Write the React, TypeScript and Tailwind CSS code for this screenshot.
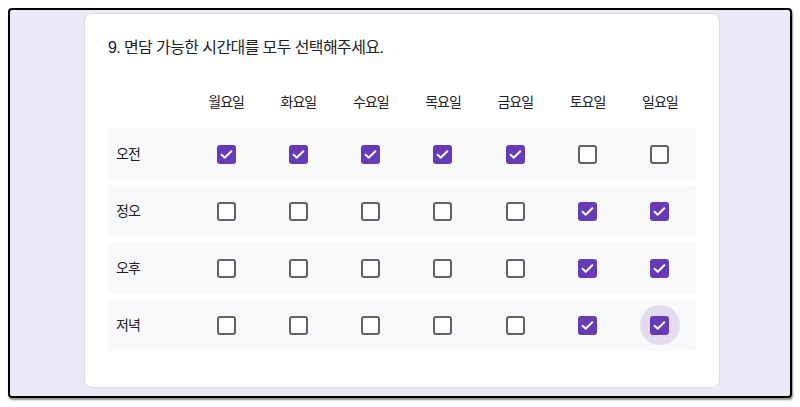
import React from "react";

const days = ["월요일", "화요일", "수요일", "목요일", "금요일", "토요일", "일요일"];
const rows: { label: string; checks: boolean[] }[] = [
  { label: "오전", checks: [true, true, true, true, true, false, false] },
  { label: "정오", checks: [false, false, false, false, false, true, true] },
  { label: "오후", checks: [false, false, false, false, false, true, true] },
  { label: "저녁", checks: [false, false, false, false, false, true, true] },
];

function Box({ checked, focused }: { checked: boolean; focused?: boolean }) {
  const box = checked ? (
    <div className="w-[19px] h-[19px] rounded-[3px] bg-[#673ab7] flex items-center justify-center">
      <svg width="19" height="19" viewBox="0 0 19 19" fill="none">
        <path d="M4.6 9.8l3.1 3 6.6-6.5" stroke="white" strokeWidth="2" strokeLinecap="round" strokeLinejoin="round" />
      </svg>
    </div>
  ) : (
    <div className="w-[19px] h-[19px] rounded-[3px] border-2 border-[#5f6368] bg-white" />
  );
  return (
    <div className="flex items-center justify-center">
      {focused ? (
        <div className="w-[40px] h-[40px] rounded-full bg-[#e4ddf0] flex items-center justify-center">{box}</div>
      ) : (
        box
      )}
    </div>
  );
}

export default function App() {
  return (
    <div
      className="w-[800px] h-[407px] bg-white pt-[8px] pl-[8px]"
      style={{ fontFamily: '"Liberation Sans", "Noto Sans CJK KR", sans-serif' }}
    >
      <div className="w-[784px] h-[390px] border-2 border-black rounded-[4px] bg-[#ede9f7] shadow-[1px_2px_2px_rgba(0,0,0,0.45)] pt-[3px] pl-[74px] overflow-hidden">
        <div className="w-[636px] bg-white rounded-[8px] border border-[#dedbe6] px-[23px] pt-[22px] pb-[36px]">
          <div className="text-[16px] leading-[24px] text-[#202124] tracking-[-0.6px]">
            9. 면담 가능한 시간대를 모두 선택해주세요.
          </div>
          <div className="mt-[32px] grid grid-cols-[82px_repeat(7,1fr)] h-[20px] items-center">
            <div />
            {days.map((d) => (
              <div key={d} className="text-center text-[14px] leading-[20px] text-[#202124] tracking-[-1px]">
                {d}
              </div>
            ))}
          </div>
          <div className="mt-[16px] flex flex-col gap-[5px]">
            {rows.map((r, ri) => (
              <div
                key={r.label}
                className="h-[52px] rounded-[4px] bg-[#f8f9fa] grid grid-cols-[82px_repeat(7,1fr)] items-center"
              >
                <div className="pl-[8px] text-[14px] text-[#202124] tracking-[-1px]">{r.label}</div>
                {r.checks.map((c, ci) => (
                  <Box key={ci} checked={c} focused={ri === 3 && ci === 6} />
                ))}
              </div>
            ))}
          </div>
        </div>
      </div>
    </div>
  );
}
